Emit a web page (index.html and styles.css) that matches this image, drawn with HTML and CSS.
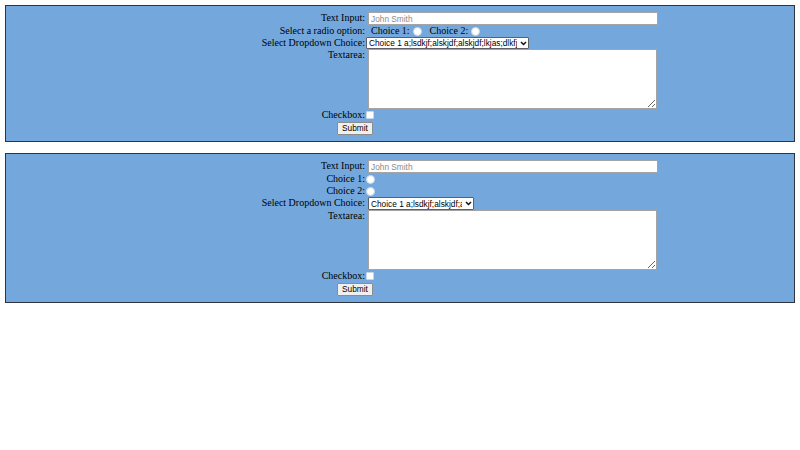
FILE: index.html
```html
<!DOCTYPE html>
<html>
<head>
<meta charset="utf-8">
<link rel="stylesheet" href="styles.css">
</head>
<body>
<form class="panel">
  <div class="row">
    <label class="lbl" for="t1">Text Input:</label>
    <input class="text" id="t1" type="text" placeholder="John Smith">
  </div>
  <div class="row">
    <span class="lbl">Select a radio option:</span>
    <span class="radios">
      <label class="opt">Choice 1:<input class="radio" type="radio" name="r1"></label>
      <label class="opt opt2">Choice 2:<input class="radio" type="radio" name="r1"></label>
    </span>
  </div>
  <div class="row">
    <label class="lbl">Select Dropdown Choice:</label>
    <span class="selwrap selwrap-auto">
      <select class="sel"><option>Choice 1 a;lsdkjf;alskjdf;alskjdf;lkjas;dlkfj</option></select>
      <svg class="chev" width="7" height="5" viewBox="0 0 7 5"><path d="M1 1 L3.5 3.5 L6 1" fill="none" stroke="#111" stroke-width="1.5"/></svg>
    </span>
  </div>
  <div class="row">
    <label class="lbl">Textarea:</label>
    <textarea class="area"></textarea>
  </div>
  <div class="row">
    <label class="lbl">Checkbox:</label>
    <input class="check" type="checkbox">
  </div>
  <div class="row submit-row">
    <button class="submit" type="submit">Submit</button>
  </div>
</form>

<form class="panel">
  <div class="row">
    <label class="lbl">Text Input:</label>
    <input class="text" type="text" placeholder="John Smith">
  </div>
  <div class="row">
    <label class="lbl">Choice 1:</label>
    <input class="radio radio-col" type="radio" name="r2">
  </div>
  <div class="row">
    <label class="lbl">Choice 2:</label>
    <input class="radio radio-col" type="radio" name="r2">
  </div>
  <div class="row">
    <label class="lbl">Select Dropdown Choice:</label>
    <span class="selwrap selwrap-fixed">
      <select class="sel"><option>Choice 1 a;lsdkjf;alskjdf;alskjdf;lkjas;dlkfj</option></select>
      <svg class="chev" width="7" height="5" viewBox="0 0 7 5"><path d="M1 1 L3.5 3.5 L6 1" fill="none" stroke="#111" stroke-width="1.5"/></svg>
    </span>
  </div>
  <div class="row">
    <label class="lbl">Textarea:</label>
    <textarea class="area"></textarea>
  </div>
  <div class="row">
    <label class="lbl">Checkbox:</label>
    <input class="check" type="checkbox">
  </div>
  <div class="row submit-row">
    <button class="submit" type="submit">Submit</button>
  </div>
</form>
</body>
</html>
```
FILE: styles.css
```css
body {
  margin: 5px;
  font-family: "Liberation Serif", "Times New Roman", serif;
  font-size: 10px;
  color: #000;
  background: #fff;
}
.panel {
  background: #74a8dc;
  border: 1px solid #2e3540;
  padding: 6px 0;
  margin: 0 0 11px 0;
  display: flex;
  flex-direction: column;
}
.row {
  display: flex;
  align-items: flex-start;
}
.lbl {
  flex: none;
  width: 359px;
  text-align: right;
  line-height: 12px;
  font-size: 10px;
}
.text {
  box-sizing: border-box;
  width: 290px;
  height: 13px;
  margin: 0 0 0 3px;
  padding: 0 2px;
  border: 1px solid #a4a4a4;
  background: #fff;
  font-family: "Liberation Sans", Arial, sans-serif;
  font-size: 8.3px;
  color: #000;
  outline: none;
}
.text::placeholder {
  color: #8a8a8a;
}
.radios {
  display: flex;
  align-items: flex-start;
  margin-left: 6px;
  line-height: 12px;
  font-size: 10px;
}
.opt {
  display: flex;
  align-items: flex-start;
}
.opt2 {
  margin-left: 8px;
}
.radio {
  appearance: none;
  box-sizing: border-box;
  width: 9px;
  height: 9px;
  margin: 2px 0 0 3px;
  border: 1px solid #c9d6e4;
  border-radius: 50%;
  background: #fff;
}
.radio-col {
  margin-left: 1px;
}
.selwrap {
  position: relative;
  display: block;
  flex: none;
  height: 12px;
}
.selwrap-auto {
  width: 163px;
  margin-left: 1px;
}
.selwrap-fixed {
  width: 106px;
  margin-left: 3px;
  height: 13px;
}
.sel {
  appearance: none;
  box-sizing: border-box;
  display: block;
  width: 100%;
  height: 100%;
  margin: 0;
  padding: 0 11px 0 2px;
  border: 1px solid #5d6066;
  border-radius: 1px;
  background: #fff;
  font-family: "Liberation Sans", Arial, sans-serif;
  font-size: 8.3px;
  color: #000;
  line-height: 10px;
}
.chev {
  position: absolute;
  right: 2px;
  top: 4px;
  pointer-events: none;
}
.area {
  box-sizing: border-box;
  width: 289px;
  height: 60px;
  margin: 0 0 0 3px;
  padding: 1px;
  border: 1px solid #a4a4a4;
  background: #fff;
  resize: both;
}
.check {
  appearance: none;
  box-sizing: border-box;
  width: 8px;
  height: 8px;
  margin: 2px 0 0 1px;
  border: 1px solid #c9d6e4;
  border-radius: 1px;
  background: #fff;
}
.submit-row {
  margin-top: 1px;
}
.submit {
  box-sizing: border-box;
  width: 36px;
  height: 13px;
  margin: 0 0 0 331px;
  padding: 0;
  border: 1px solid #8c8c8c;
  border-radius: 1px;
  background: #efefef;
  font-family: "Liberation Sans", Arial, sans-serif;
  font-size: 8.3px;
  line-height: 11px;
  color: #000;
}
```
